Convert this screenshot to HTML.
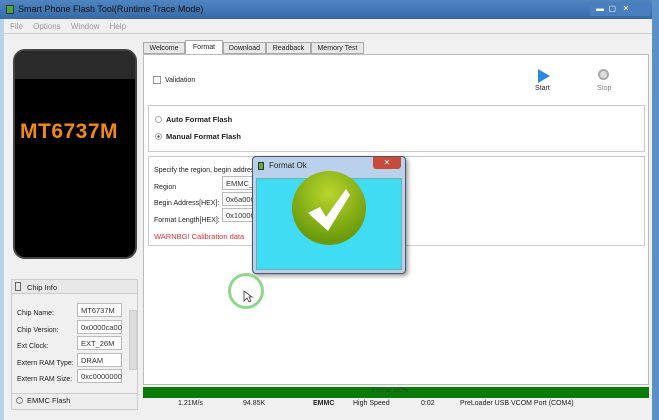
<!DOCTYPE html>
<html><head><style>
*{margin:0;padding:0;box-sizing:border-box}
body{width:659px;height:420px;overflow:hidden;background:#f0f0f0;font-family:"Liberation Sans",sans-serif;font-size:8px;color:#222;position:relative}
.a{position:absolute}
.inp{position:absolute;background:#fff;border:1px solid #bbb;height:14px;font-size:7.5px;padding:2px 3px;color:#333}
</style></head><body>
<div class="a" style="left:0;top:0;width:659px;height:19px;background:linear-gradient(#4f86c2,#336aa8)"></div>
<div class="a" style="left:6px;top:5px;width:8px;height:9px;background:#4a4;border:1px solid #333"></div>
<div class="a" style="left:18px;top:4px;font-size:9px;color:#111">Smart Phone Flash Tool(Runtime Trace Mode)</div>
<div class="a" style="left:590px;top:2px;width:60px;height:14px;background:#4a7fbf"></div>
<div class="a" style="left:596px;top:4px;color:#fff;font-size:8px">▬ &nbsp;▢ &nbsp;&nbsp;✕</div>
<div class="a" style="left:652px;top:0;width:7px;height:420px;background:#5a8fc8"></div>
<div class="a" style="left:0;top:19px;width:4px;height:401px;background:#b8d3ee"></div>
<div class="a" style="left:10px;top:22px;color:#999;font-size:8px;word-spacing:8px">File Options Window Help</div>
<div class="a" style="left:4px;top:33px;width:648px;height:1px;background:#ccc"></div>
<!-- phone -->
<div class="a" style="left:13px;top:49px;width:124px;height:210px;background:#000;border-radius:12px;border:2px solid #444"></div>
<div class="a" style="left:15px;top:51px;width:120px;height:28px;background:#2a2a2a;border-radius:10px 10px 0 0"></div>
<div class="a" style="left:20px;top:120px;font-size:21px;font-weight:bold;color:#f08a10;letter-spacing:0.5px">MT6737M</div>
<!-- chip info -->
<div class="a" style="left:11px;top:279px;width:127px;height:131px;border:1px solid #ccc"></div>
<div class="a" style="left:12px;top:280px;width:125px;height:14px;background:#e8e8e8;border-bottom:1px solid #ccc"></div>
<div class="a" style="left:15px;top:282px;width:6px;height:9px;border:1px solid #666"></div>
<div class="a" style="left:27px;top:283px;font-size:7.5px">Chip Info</div>
<div class="a" style="left:17px;top:306px;font-size:7px;line-height:16.5px">Chip Name:<br>Chip Version:<br>Ext Clock:<br>Extern RAM Type:<br>Extern RAM Size:</div>
<div class="inp" style="left:77px;top:303px;width:45px">MT6737M</div>
<div class="inp" style="left:77px;top:320px;width:45px">0x0000ca00</div>
<div class="inp" style="left:77px;top:336px;width:45px">EXT_26M</div>
<div class="inp" style="left:77px;top:353px;width:45px">DRAM</div>
<div class="inp" style="left:77px;top:369px;width:45px">0xc0000000</div>
<div class="a" style="left:129px;top:310px;width:8px;height:60px;background:#ddd;border:1px solid #ccc"></div>
<div class="a" style="left:12px;top:393px;width:125px;height:16px;background:#eee;border-top:1px solid #ccc"></div>
<div class="a" style="left:16px;top:397px;width:7px;height:7px;border-radius:50%;border:1px solid #888"></div>
<div class="a" style="left:27px;top:396px;font-size:7.5px">EMMC Flash</div>
<!-- tabs -->
<div class="a" style="left:143px;top:42px;width:42px;height:12px;border:1px solid #aaa;background:#e8e8e8;font-size:7px;text-align:center;line-height:11px">Welcome</div>
<div class="a" style="left:185px;top:40px;width:38px;height:15px;border:1px solid #aaa;border-bottom:none;background:#fff;font-size:7px;text-align:center;line-height:13px">Format</div>
<div class="a" style="left:223px;top:42px;width:43px;height:12px;border:1px solid #aaa;background:#e8e8e8;font-size:7px;text-align:center;line-height:11px">Download</div>
<div class="a" style="left:266px;top:42px;width:45px;height:12px;border:1px solid #aaa;background:#e8e8e8;font-size:7px;text-align:center;line-height:11px">Readback</div>
<div class="a" style="left:311px;top:42px;width:53px;height:12px;border:1px solid #aaa;background:#e8e8e8;font-size:7px;text-align:center;line-height:11px">Memory Test</div>
<div class="a" style="left:143px;top:54px;width:506px;height:331px;background:#fff;border:1px solid #bbb"></div>
<div class="a" style="left:153px;top:76px;width:8px;height:8px;border:1px solid #999"></div>
<div class="a" style="left:165px;top:77px;font-size:7px">Validation</div>
<svg class="a" style="left:536px;top:68px" width="16" height="16"><path d="M2 1 L14 8 L2 15 Z" fill="#2a8ae0"/></svg>
<div class="a" style="left:535px;top:85px;font-size:7px">Start</div>
<div class="a" style="left:598px;top:69px;width:11px;height:11px;border-radius:50%;border:2px solid #aaa;background:#ddd"></div>
<div class="a" style="left:597px;top:85px;font-size:7px;color:#888">Stop</div>
<div class="a" style="left:148px;top:105px;width:497px;height:47px;border:1px solid #ccc"></div>
<div class="a" style="left:155px;top:116px;width:7px;height:7px;border-radius:50%;border:1px solid #aaa"></div>
<div class="a" style="left:166px;top:115px;font-size:7.5px;font-weight:bold">Auto Format Flash</div>
<div class="a" style="left:155px;top:133px;width:7px;height:7px;border-radius:50%;border:1px solid #aaa;background:radial-gradient(#555 30%,#fff 40%)"></div>
<div class="a" style="left:166px;top:132px;font-size:7.5px;font-weight:bold">Manual Format Flash</div>
<div class="a" style="left:148px;top:156px;width:497px;height:90px;border:1px solid #ccc"></div>
<div class="a" style="left:154px;top:163px;font-size:7px;line-height:16.5px">Specify the region, begin address<br>Region<br>Begin Address[HEX]:<br>Format Length[HEX]:<br><span style="color:#d33;font-size:7.5px">WARNBG! Calibration data</span></div>
<div class="inp" style="left:222px;top:176px;width:40px">EMMC_U</div>
<div class="inp" style="left:222px;top:192px;width:40px">0x6a000</div>
<div class="inp" style="left:222px;top:208px;width:40px">0x10000</div>
<!-- dialog -->
<div class="a" style="left:252px;top:156px;width:154px;height:118px;background:#b9d1ea;border:1px solid #556;border-radius:4px;box-shadow:2px 2px 4px rgba(0,0,0,.4)"></div>
<div class="a" style="left:258px;top:162px;width:6px;height:8px;background:#6a4;border:1px solid #333"></div>
<div class="a" style="left:269px;top:161px;font-size:8px">Format Ok</div>
<div class="a" style="left:373px;top:157px;width:28px;height:12px;background:#c84a3a;border-radius:0 0 3px 3px;color:#fff;font-size:8px;text-align:center;line-height:12px">✕</div>
<div class="a" style="left:256px;top:178px;width:146px;height:92px;background:#3fdcf3;border:1px solid #7aa"></div>
<div class="a" style="left:292px;top:171px;width:74px;height:74px;border-radius:50%;background:radial-gradient(circle at 50% 30%,#b9d62c,#6a9a0c 75%)"></div>
<svg class="a" style="left:292px;top:171px" width="74" height="74"><path d="M16 42 L28 36 L34 46 L54 18 L58 24 L36 60 Z" fill="#fff"/></svg>
<div class="a" style="left:228px;top:273px;width:36px;height:36px;border-radius:50%;border:3px solid #8ed88e"></div>
<svg class="a" style="left:243px;top:290px" width="10" height="14"><path d="M1 1 L1 11 L4 8 L6 12 L8 11 L6 7 L9 7 Z" fill="#fff" stroke="#333" stroke-width="0.8"/></svg>
<!-- progress -->
<div class="a" style="left:143px;top:387px;width:506px;height:11px;background:#0b7a0b"></div>
<div class="a" style="left:372px;top:388px;font-size:6px;color:#2a4a2a">Format 100%</div>
<div class="a" style="left:143px;top:398px;width:506px;height:12px;font-size:7px;line-height:12px">
<span class="a" style="left:35px">1.21M/s</span><span class="a" style="left:100px">94.85K</span><span class="a" style="left:170px;font-weight:bold">EMMC</span><span class="a" style="left:210px">High Speed</span><span class="a" style="left:278px">0:02</span><span class="a" style="left:317px">PreLoader USB VCOM Port (COM4)</span></div>
</body></html>
